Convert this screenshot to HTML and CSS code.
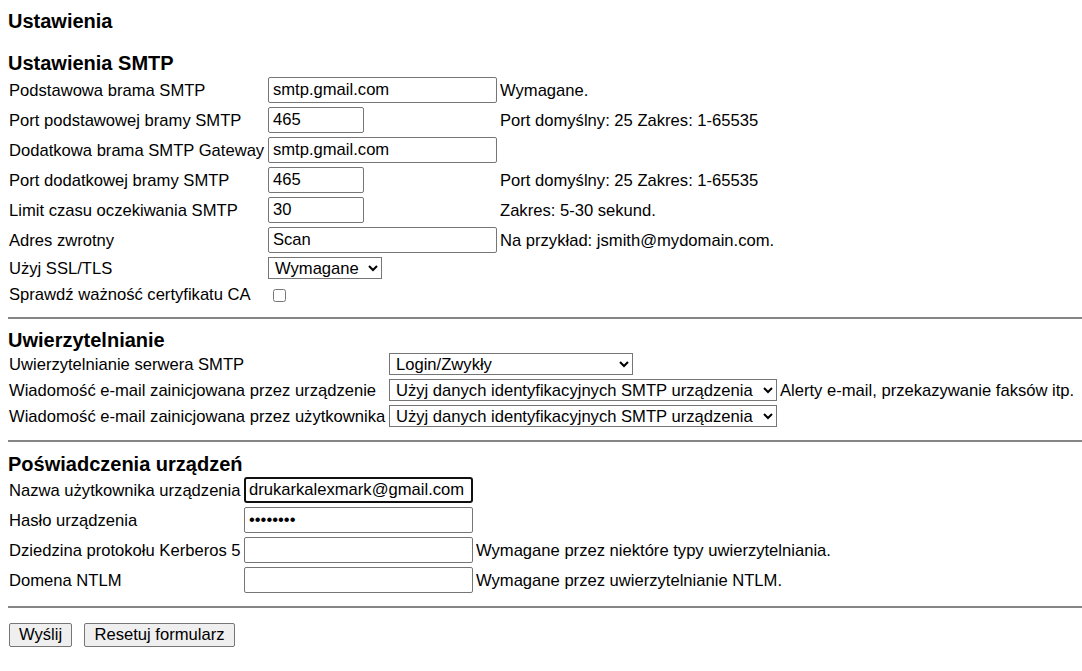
FILE: index.html
```html
<!DOCTYPE html>
<html lang="pl">
<head>
<meta charset="utf-8">
<title>Ustawienia</title>
<link rel="stylesheet" href="styles.css">
</head>
<body>
<h1 class="title">Ustawienia</h1>
<form class="form">
  <h2 class="section-title first">Ustawienia SMTP</h2>
  <table class="grid grid-smtp">
    <tr class="row">
      <td class="label">Podstawowa brama SMTP</td>
      <td class="field"><input class="text wide" type="text" value="smtp.gmail.com"></td>
      <td class="note">Wymagane.</td>
    </tr>
    <tr class="row">
      <td class="label">Port podstawowej bramy SMTP</td>
      <td class="field"><input class="text short" type="text" value="465"></td>
      <td class="note">Port domyślny: 25 Zakres: 1-65535</td>
    </tr>
    <tr class="row">
      <td class="label">Dodatkowa brama SMTP Gateway</td>
      <td class="field"><input class="text wide" type="text" value="smtp.gmail.com"></td>
      <td class="note"></td>
    </tr>
    <tr class="row">
      <td class="label">Port dodatkowej bramy SMTP</td>
      <td class="field"><input class="text short" type="text" value="465"></td>
      <td class="note">Port domyślny: 25 Zakres: 1-65535</td>
    </tr>
    <tr class="row">
      <td class="label">Limit czasu oczekiwania SMTP</td>
      <td class="field"><input class="text short" type="text" value="30"></td>
      <td class="note">Zakres: 5-30 sekund.</td>
    </tr>
    <tr class="row">
      <td class="label">Adres zwrotny</td>
      <td class="field"><input class="text wide" type="text" value="Scan"></td>
      <td class="note">Na przykład: jsmith@mydomain.com.</td>
    </tr>
    <tr class="row row-sel">
      <td class="label">Użyj SSL/TLS</td>
      <td class="field"><select class="sel sel-ssl"><option>Wymagane</option></select></td>
      <td class="note"></td>
    </tr>
    <tr class="row row-sel">
      <td class="label">Sprawdź ważność certyfikatu CA</td>
      <td class="field"><input class="check" type="checkbox"></td>
      <td class="note"></td>
    </tr>
  </table>
  <hr class="rule rule-first">
  <h2 class="section-title">Uwierzytelnianie</h2>
  <table class="grid grid-auth">
    <tr class="row row-sel">
      <td class="label">Uwierzytelnianie serwera SMTP</td>
      <td class="field"><select class="sel sel-login"><option>Login/Zwykły</option></select></td>
      <td class="note"></td>
    </tr>
    <tr class="row row-sel">
      <td class="label">Wiadomość e-mail zainicjowana przez urządzenie</td>
      <td class="field"><select class="sel sel-cred"><option>Użyj danych identyfikacyjnych SMTP urządzenia</option></select></td>
      <td class="note">Alerty e-mail, przekazywanie faksów itp.</td>
    </tr>
    <tr class="row row-sel">
      <td class="label">Wiadomość e-mail zainicjowana przez użytkownika</td>
      <td class="field"><select class="sel sel-cred"><option>Użyj danych identyfikacyjnych SMTP urządzenia</option></select></td>
      <td class="note"></td>
    </tr>
  </table>
  <hr class="rule">
  <h2 class="section-title third">Poświadczenia urządzeń</h2>
  <table class="grid grid-dev">
    <tr class="row">
      <td class="label">Nazwa użytkownika urządzenia</td>
      <td class="field"><input class="text dev focused" type="text" value="drukarkalexmark@gmail.com"></td>
      <td class="note"></td>
    </tr>
    <tr class="row">
      <td class="label">Hasło urządzenia</td>
      <td class="field"><input class="text dev" type="password" value="12345678"></td>
      <td class="note"></td>
    </tr>
    <tr class="row">
      <td class="label">Dziedzina protokołu Kerberos 5</td>
      <td class="field"><input class="text dev" type="text" value=""></td>
      <td class="note">Wymagane przez niektóre typy uwierzytelniania.</td>
    </tr>
    <tr class="row">
      <td class="label">Domena NTLM</td>
      <td class="field"><input class="text dev" type="text" value=""></td>
      <td class="note">Wymagane przez uwierzytelnianie NTLM.</td>
    </tr>
  </table>
  <hr class="rule">
  <div class="actions">
    <button class="btn btn-send" type="button">Wyślij</button>
    <button class="btn btn-reset" type="button">Resetuj formularz</button>
  </div>
</form>
</body>
</html>
```
FILE: styles.css
```css
html, body {
  background: #ffffff;
}
body {
  margin: 8px 0 8px 8px;
  font-family: "Liberation Sans", Arial, sans-serif;
  font-size: 16.6px;
  color: #000000;
  overflow: hidden;
}
.title {
  margin: 2px 0 0 0;
  font-size: 20px;
  line-height: 22px;
  font-weight: bold;
}
.section-title {
  margin: 10px 0 0 0;
  font-size: 20px;
  line-height: 22px;
  font-weight: bold;
}
.section-title.first {
  margin-top: 20px;
  margin-bottom: 1px;
}
.section-title.third {
  margin-top: 11px;
}
.form {
  margin: 0;
}
.grid {
  border-collapse: separate;
  border-spacing: 0;
}
.row {
  height: 30px;
}
.row-sel {
  height: 26px;
}
td {
  padding: 0 1px;
  vertical-align: middle;
  white-space: nowrap;
  line-height: 19px;
}
.grid-smtp .label { width: 257px; }
.grid-auth .label { width: 378px; }
.grid-dev .label { width: 233px; }
.field {
  font-size: 0;
}
.text {
  box-sizing: border-box;
  height: 26px;
  margin: 0;
  padding: 0 4px;
  border: 1px solid #767676;
  border-radius: 2px;
  font-family: "Liberation Sans", Arial, sans-serif;
  font-size: 16.6px;
  color: #000000;
  background: #ffffff;
  vertical-align: middle;
  outline: none;
}
.wide { width: 229px; }
.short { width: 96px; }
.dev { width: 229px; }
.focused {
  border: 2px solid #101010;
  border-radius: 3px;
  padding: 0 3px;
}
.note {
  padding-left: 2px;
}
.sel {
  box-sizing: border-box;
  height: 22px;
  margin: 0;
  padding: 0 0 0 2px;
  border: 1px solid #767676;
  border-radius: 0;
  font-family: "Liberation Sans", Arial, sans-serif;
  font-size: 16.6px;
  color: #000000;
  background: #ffffff;
  vertical-align: middle;
}
.sel-ssl { width: 114px; }
.sel-login { width: 244px; }
.sel-cred { width: 388px; }
.check {
  width: 13px;
  height: 13px;
  margin: 4px 0 0 5px;
  vertical-align: middle;
}
.rule {
  height: 2px;
  margin: 11px 0 0 0;
  border: 0;
  background: #858585;
}
.rule-first {
  margin-top: 10px;
}
.actions {
  display: flex;
  gap: 12px;
  margin-top: 15px;
  padding-left: 1px;
}
.btn {
  box-sizing: border-box;
  height: 24px;
  margin: 0;
  padding: 0 6px;
  border: 1px solid #767676;
  border-radius: 2px;
  background: #efefef;
  font-family: "Liberation Sans", Arial, sans-serif;
  font-size: 16.6px;
  color: #000000;
}
.btn-send { width: 63px; }
.btn-reset { width: 151px; }
```
